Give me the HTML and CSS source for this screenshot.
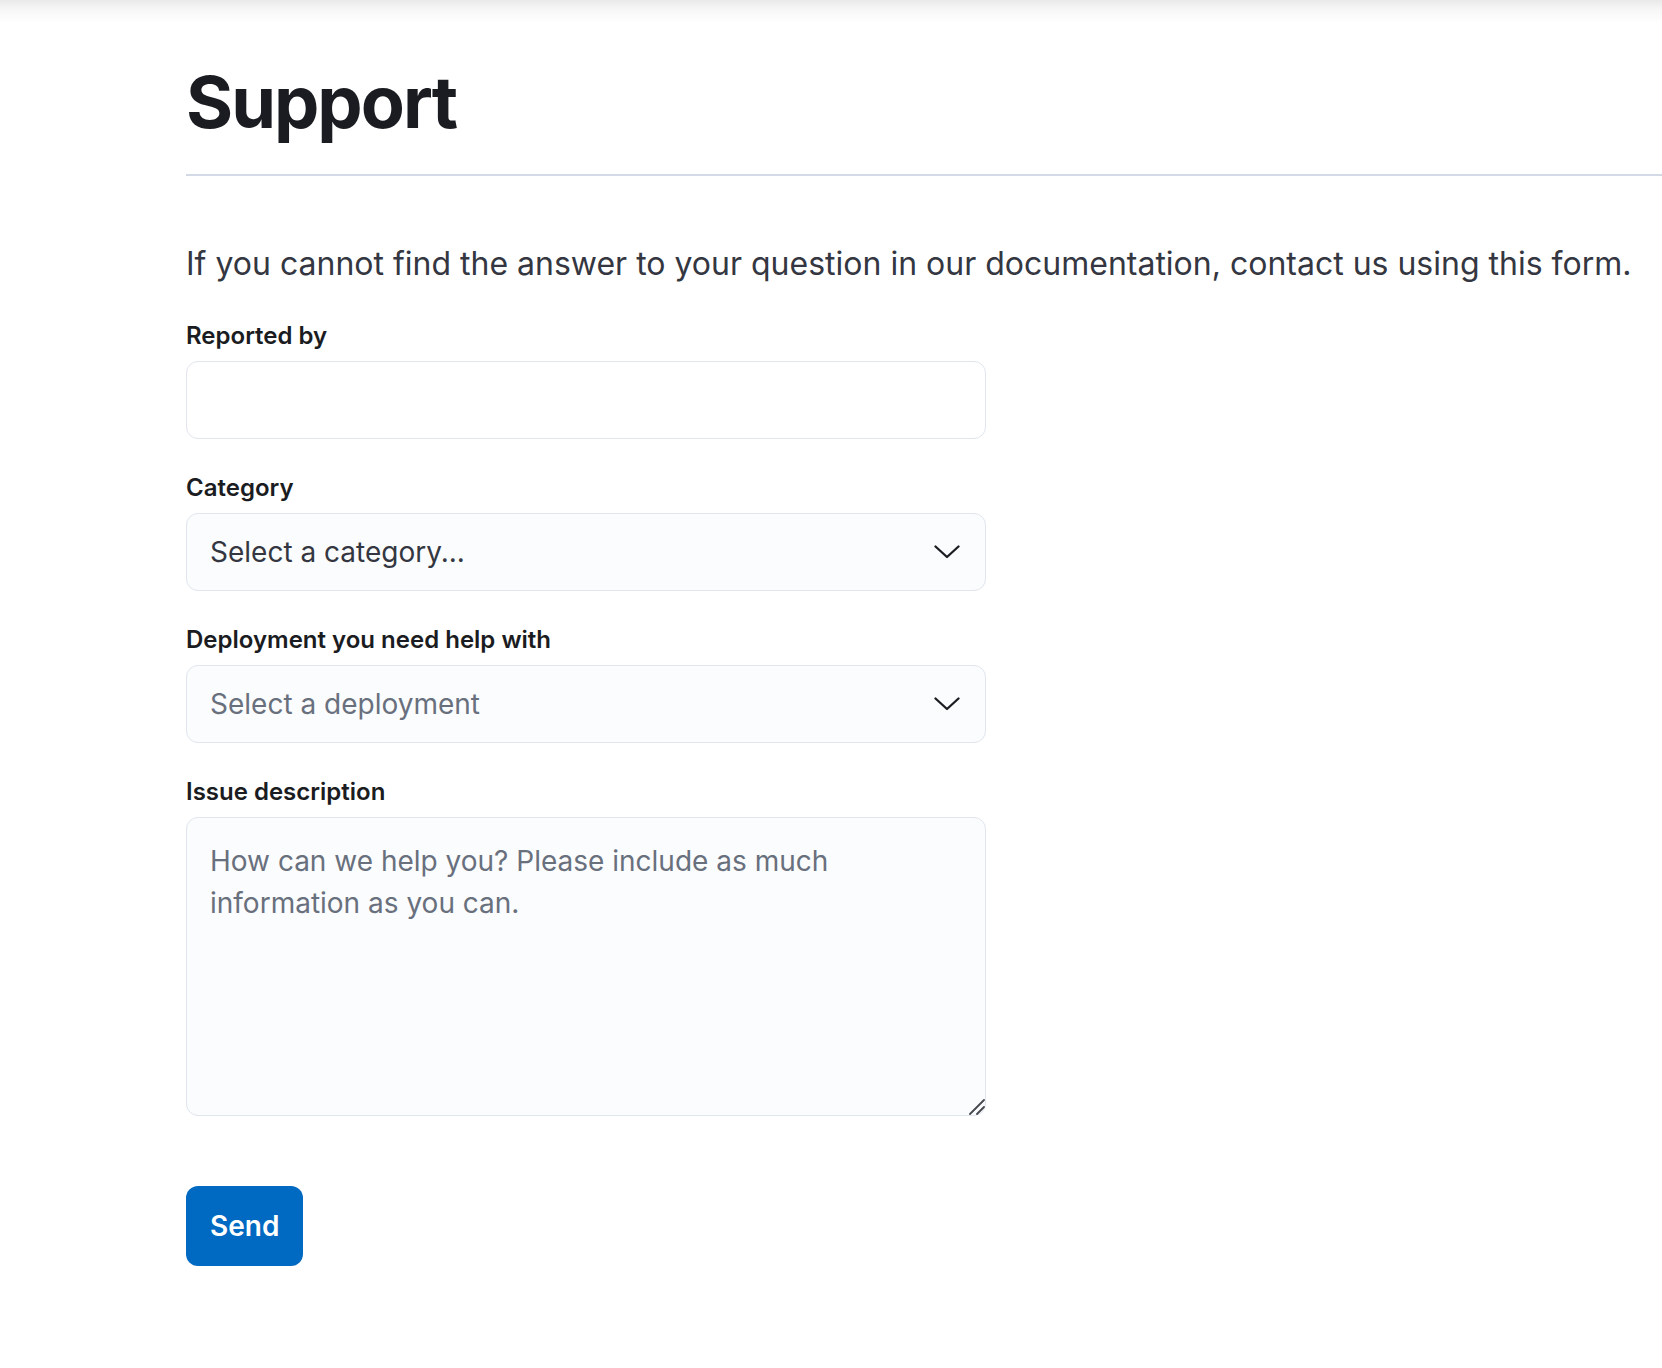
FILE: index.html
```html
<!DOCTYPE html>
<html lang="en">
<head>
<meta charset="utf-8">
<title>Support</title>
<link rel="stylesheet" href="styles.css">
</head>
<body>
<div class="topshade"></div>
<main class="page">
  <header class="page-header">
    <h1 class="title">Support</h1>
  </header>
  <p class="intro">If you cannot find the answer to your question in our documentation, contact us using this form.</p>
  <form class="form">
    <div class="field">
      <label class="label" for="reporter">Reported by</label>
      <input class="control control-plain" id="reporter" type="text">
    </div>
    <div class="field">
      <label class="label" for="category">Category</label>
      <div class="select-wrap">
        <select class="control control-select" id="category">
          <option>Select a category...</option>
        </select>
        <svg class="chevron" viewBox="0 0 26 14" width="26" height="14" aria-hidden="true"><path d="M1.5 1.5 L13 12 L24.5 1.5" fill="none" stroke="#1a1c21" stroke-width="2.3" stroke-linecap="round" stroke-linejoin="round"/></svg>
      </div>
    </div>
    <div class="field">
      <label class="label" for="deployment">Deployment you need help with</label>
      <div class="select-wrap">
        <select class="control control-select is-placeholder" id="deployment">
          <option>Select a deployment</option>
        </select>
        <svg class="chevron" viewBox="0 0 26 14" width="26" height="14" aria-hidden="true"><path d="M1.5 1.5 L13 12 L24.5 1.5" fill="none" stroke="#1a1c21" stroke-width="2.3" stroke-linecap="round" stroke-linejoin="round"/></svg>
      </div>
    </div>
    <div class="field">
      <label class="label" for="description">Issue description</label>
      <div class="area-wrap">
        <textarea class="control control-area" id="description" placeholder="How can we help you? Please include as much information as you can."></textarea>
        <svg class="grip" viewBox="0 0 18 18" width="18" height="18" aria-hidden="true"><path d="M17 3 L3 17 M17 10 L10 17" fill="none" stroke="#45484f" stroke-width="1.8" stroke-linecap="round"/></svg>
      </div>
    </div>
    <div class="actions">
      <button class="btn" type="button">Send</button>
    </div>
  </form>
</main>
</body>
</html>
```

FILE: styles.css
```css
* { box-sizing: border-box; }

html, body {
  margin: 0;
  padding: 0;
  background: #ffffff;
}

body {
  font-family: Inter, "Noto Sans", "Liberation Sans", sans-serif;
  color: #1a1c21;
}

.topshade {
  height: 24px;
  background: linear-gradient(to bottom, #e9e9ea 0%, #f7f7f7 40%, #ffffff 100%);
}

.page {
  padding-left: 186px;
  padding-top: 35px;
}

.page-header {
  border-bottom: 2px solid #d3dae6;
  padding-bottom: 29px;
}

.title {
  margin: 0;
  font-size: 72px;
  line-height: 86px;
  font-weight: 700;
  color: #1a1c21;
  letter-spacing: -2px;
}

.intro {
  margin: 64px 0 0;
  font-size: 32px;
  line-height: 48px;
  color: #343741;
}

.form {
  width: 800px;
  display: flex;
  flex-direction: column;
}

.field {
  display: flex;
  flex-direction: column;
  gap: 10px;
  margin-top: 33px;
}

.field + .field {
  margin-top: 34px;
}

.label {
  font-size: 24px;
  line-height: 30px;
  font-weight: 600;
  color: #1a1c21;
}

.control {
  width: 800px;
  font-family: inherit;
  font-size: 28px;
  color: #343741;
  border: 1.5px solid #e0e5ee;
  border-radius: 12px;
  outline: none;
  margin: 0;
}

.control-plain {
  height: 78px;
  background: #ffffff;
  padding: 0 24px;
}

.select-wrap,
.area-wrap {
  position: relative;
}

.control-select {
  -webkit-appearance: none;
  appearance: none;
  height: 78px;
  background: #fbfcfd;
  padding: 0 70px 0 23px;
  color: #343741;
}

.control-select.is-placeholder {
  color: #69707d;
}

.chevron {
  position: absolute;
  right: 26px;
  top: 32px;
  pointer-events: none;
}

.control-area {
  display: block;
  height: 299px;
  background: #fbfcfd;
  padding: 22px 23px;
  line-height: 42px;
  resize: none;
}

.control-area::placeholder {
  color: #69707d;
  opacity: 1;
}

.grip {
  position: absolute;
  right: 1px;
  bottom: 1px;
  pointer-events: none;
}

.actions {
  margin-top: 70px;
}

.btn {
  height: 80px;
  padding: 0 24px;
  border: none;
  border-radius: 12px;
  background: #0069c2;
  color: #ffffff;
  font-family: inherit;
  font-size: 28px;
  font-weight: 600;
  cursor: pointer;
}
```
